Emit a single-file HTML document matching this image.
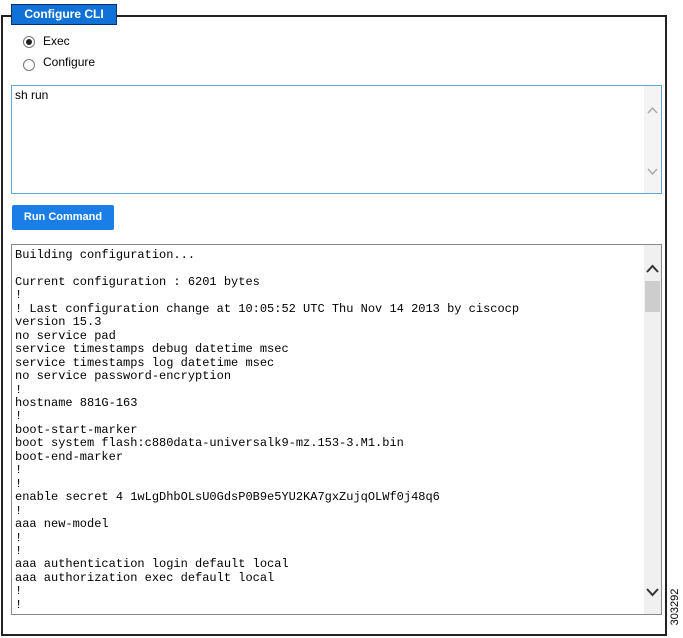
<!DOCTYPE html>
<html><head><meta charset="utf-8"><style>
body{margin:0;width:683px;height:638px;background:#fff;position:relative;overflow:hidden;font-family:"Liberation Sans",Arial,sans-serif}
.frame{position:absolute;left:1px;top:15px;width:666px;height:621px;border:2px solid #222;box-sizing:border-box}
.tab{position:absolute;left:11px;top:4px;width:106px;height:21px;background:#1072d6;border:1px solid #0a2f70;box-sizing:border-box;color:#fff;font-size:12px;font-weight:bold;text-align:center;line-height:19px}
.radio{position:absolute;left:23px;width:12px;height:12px;border:1px solid #777;border-radius:50%;box-sizing:border-box;background:#fff}
.lbl{position:absolute;left:43px;font-size:12px;color:#000}
.ta{position:absolute;left:11px;top:85px;width:651px;height:109px;border:1px solid #5fa8cf;box-sizing:border-box}
.sb1{position:absolute;right:0;top:0;width:17px;height:107px;background:#f4f4f4}
.btn{position:absolute;left:12px;top:205px;width:102px;height:25px;background:#1a7ee6;border-radius:2px;color:#fff;font-size:11px;font-weight:bold;text-align:center;line-height:25px}
.out{position:absolute;left:11px;top:244px;width:651px;height:371px;border:1px solid #888;box-sizing:border-box;overflow:hidden}
.out pre{margin:0;position:absolute;left:3px;top:4px;font-family:"Liberation Mono",monospace;font-size:12px;line-height:13.45px;color:#000}
.sb2{position:absolute;right:0;top:0;width:17px;height:369px;background:#f0f0f0}
.thumb{position:absolute;left:1px;top:36px;width:15px;height:31px;background:#cdcdcd}
.num{position:absolute;left:655px;top:601px;width:40px;height:12px;line-height:12px;text-align:center;transform:rotate(-90deg);font-size:11px;color:#000}
</style></head><body>
<div class="frame"></div>
<div class="tab">Configure CLI</div>
<div class="radio" style="top:36px"><div style="position:absolute;left:2px;top:2px;width:6px;height:6px;border-radius:50%;background:#222"></div></div>
<div class="lbl" style="top:34px">Exec</div>
<div class="radio" style="top:59px"></div>
<div class="lbl" style="top:55px">Configure</div>
<div class="ta"><div style="position:absolute;left:3px;top:2px;font-size:12px">sh run</div>
<div class="sb1"><svg width="17" height="107"><path d="M4 27 L8.5 22 L13 27" stroke="#aaa" stroke-width="1.5" fill="none"/><path d="M4 83 L8.5 88 L13 83" stroke="#aaa" stroke-width="1.5" fill="none"/></svg></div></div>
<div class="btn">Run Command</div>
<div class="out"><pre>Building configuration...

Current configuration : 6201 bytes
!
! Last configuration change at 10:05:52 UTC Thu Nov 14 2013 by ciscocp
version 15.3
no service pad
service timestamps debug datetime msec
service timestamps log datetime msec
no service password-encryption
!
hostname 881G-163
!
boot-start-marker
boot system flash:c880data-universalk9-mz.153-3.M1.bin
boot-end-marker
!
!
enable secret 4 1wLgDhbOLsU0GdsP0B9e5YU2KA7gxZujqOLWf0j48q6
!
aaa new-model
!
!
aaa authentication login default local
aaa authorization exec default local
!
!</pre>
<div class="sb2"><svg width="17" height="369"><path d="M3 27 L8.5 21 L14 27" stroke="#333" stroke-width="2" fill="none"/><path d="M3 344 L8.5 350 L14 344" stroke="#333" stroke-width="2" fill="none"/></svg><div class="thumb"></div></div></div>
<div class="num">303292</div>
</body></html>
